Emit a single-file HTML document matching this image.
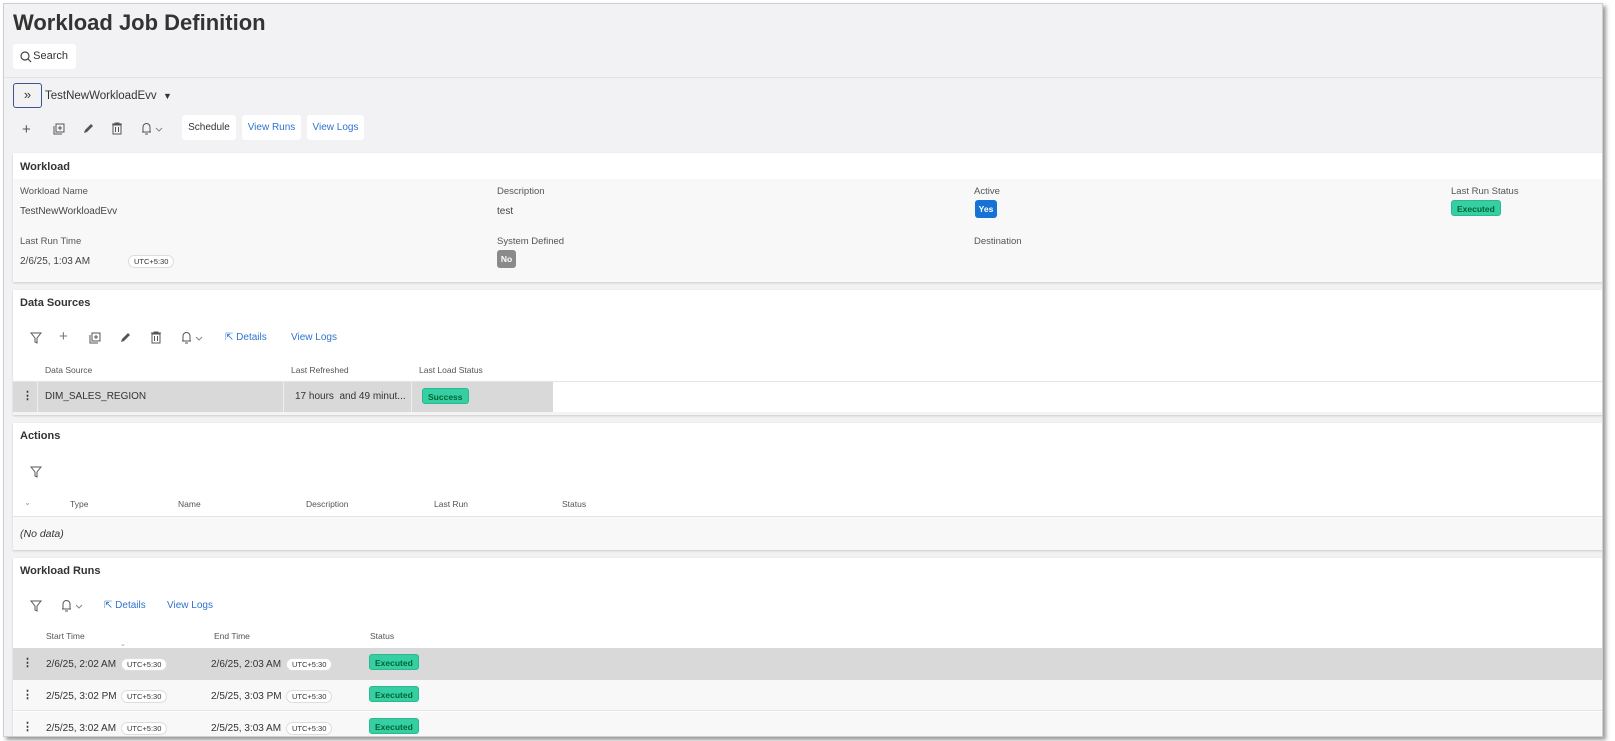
<!DOCTYPE html>
<html><head><meta charset="utf-8"><style>
*{box-sizing:border-box;margin:0;padding:0}
body{width:1615px;height:741px;background:#fff;font-family:"Liberation Sans",sans-serif;position:relative;overflow:hidden;color:#333}
.frame{position:absolute;left:3px;top:3px;width:1600px;height:734px;background:#f2f2f4;border:1px solid #cfcfcf;box-shadow:3px 3px 4px #999;overflow:hidden}
.a{position:absolute}
.card{position:absolute;left:9px;width:1592px;background:#fff;box-shadow:0 1px 2px #ccc}
.h{position:absolute;left:7px;font-size:11px;font-weight:bold;color:#333}
.lbl{position:absolute;font-size:9.5px;color:#555}
.val{position:absolute;font-size:10px;color:#444}
.btn{position:absolute;background:#fff;border-radius:3px;font-size:10px;height:25px;line-height:25px;text-align:center}
.blue{color:#2f73d0}
.badge{position:absolute;background:#35cfa3;color:#063;font-size:8.5px;font-weight:bold;border-radius:3px;height:16px;line-height:16px;padding:0 5px;border:1px solid #2cb88f}
.utc{position:absolute;font-size:7.5px;border:1px solid #ddd;border-radius:8px;padding:1px 5px;background:#fff;color:#333}
.ch{position:absolute;font-size:8.5px;color:#555}
svg{position:absolute}
</style></head><body>
<div class="frame">
<div class="a" style="left:9px;top:6px;font-size:22px;font-weight:bold;color:#333">Workload Job Definition</div>
<div class="btn" style="left:9px;top:40px;width:63px;font-size:11px">&nbsp;&nbsp;&nbsp;&nbsp;Search</div>
<svg style="left:16px;top:47px" width="12" height="12"><circle cx="5" cy="5" r="4" fill="none" stroke="#444" stroke-width="1.2"/><path d="M8 8l3 3" stroke="#444" stroke-width="1.2"/></svg>
<div class="a" style="left:0;top:73px;width:1600px;height:1px;background:#e2e2e6"></div>
<div class="a" style="left:9px;top:79px;width:29px;height:25px;border:1px solid #3b5590;border-radius:3px;text-align:center;line-height:22px;font-size:13px">»</div>
<div class="a" style="left:41px;top:86px;font-size:11.5px;color:#333">TestNewWorkloadEvv &nbsp;<span style="font-size:9px">▼</span></div>
<div class="a" style="left:18px;top:117px;font-size:15px;color:#555">+</div>
<svg style="left:49px;top:119px" width="12" height="12"><rect x="3" y="1" width="8" height="8" fill="none" stroke="#555"/><path d="M1 3v8h8M7 3v4M5 5h4" fill="none" stroke="#555"/></svg>
<svg style="left:78px;top:119px" width="12" height="12"><path d="M2 10l1-3 6-6 2 2-6 6z" fill="#555"/></svg>
<svg style="left:107px;top:118px" width="12" height="13"><path d="M1 2h10M4 2V1h4v1M2 3h8v9H2z" fill="none" stroke="#555"/><path d="M4.5 5v5M7.5 5v5" stroke="#555"/></svg>
<svg style="left:136px;top:118px" width="24" height="13"><path d="M2 10h9M3 10V5a3.5 3.5 0 0 1 7 0v5M5 12h3" fill="none" stroke="#555"/><path d="M16 6l3 3 3-3" fill="none" stroke="#888"/></svg>
<div class="btn" style="left:178px;top:111px;width:54px">Schedule</div>
<div class="btn blue" style="left:238px;top:111px;width:59px">View Runs</div>
<div class="btn blue" style="left:303px;top:111px;width:57px">View Logs</div>

<div class="card" style="top:149px;height:129px">
<div class="h" style="top:8px">Workload</div>
<div class="a" style="left:0;top:26px;width:1592px;height:103px;background:#f8f8f8"></div>
<div class="lbl" style="left:7px;top:33px">Workload Name</div>
<div class="val" style="left:7px;top:53px">TestNewWorkloadEvv</div>
<div class="lbl" style="left:7px;top:83px">Last Run Time</div>
<div class="val" style="left:7px;top:103px">2/6/25, 1:03 AM</div>
<div class="utc" style="left:115px;top:102px">UTC+5:30</div>
<div class="lbl" style="left:484px;top:33px">Description</div>
<div class="val" style="left:484px;top:53px">test</div>
<div class="lbl" style="left:484px;top:83px">System Defined</div>
<div class="a" style="left:484px;top:97px;width:19px;height:18px;background:#8a8a8a;border-radius:3px;color:#fff;font-size:8.5px;font-weight:bold;text-align:center;line-height:18px">No</div>
<div class="lbl" style="left:961px;top:33px">Active</div>
<div class="a" style="left:962px;top:47px;width:22px;height:18px;background:#1672d4;border-radius:3px;color:#fff;font-size:8.5px;font-weight:bold;text-align:center;line-height:18px">Yes</div>
<div class="lbl" style="left:961px;top:83px">Destination</div>
<div class="lbl" style="left:1438px;top:33px">Last Run Status</div>
<div class="badge" style="left:1438px;top:47px">Executed</div>
</div>

<div class="card" style="top:286px;height:125px">
<div class="h" style="top:7px">Data Sources</div>
<svg style="left:17px;top:42px" width="12" height="12"><path d="M1 1h10L7 6v5L5 10V6z" fill="none" stroke="#555"/></svg>
<div class="a" style="left:46px;top:38px;font-size:15px;color:#777">+</div>
<svg style="left:76px;top:42px" width="12" height="12"><rect x="3" y="1" width="8" height="8" fill="none" stroke="#555"/><path d="M1 3v8h8M7 3v4M5 5h4" fill="none" stroke="#555"/></svg>
<svg style="left:106px;top:42px" width="12" height="12"><path d="M2 10l1-3 6-6 2 2-6 6z" fill="#555"/></svg>
<svg style="left:137px;top:41px" width="12" height="13"><path d="M1 2h10M4 2V1h4v1M2 3h8v9H2z" fill="none" stroke="#555"/><path d="M4.5 5v5M7.5 5v5" stroke="#555"/></svg>
<svg style="left:167px;top:41px" width="24" height="13"><path d="M2 10h9M3 10V5a3.5 3.5 0 0 1 7 0v5M5 12h3" fill="none" stroke="#555"/><path d="M16 6l3 3 3-3" fill="none" stroke="#888"/></svg>
<div class="a blue" style="left:212px;top:42px;font-size:10px">⇱ Details</div>
<div class="a blue" style="left:278px;top:42px;font-size:10px">View Logs</div>
<div class="ch" style="left:32px;top:75px">Data Source</div>
<div class="ch" style="left:278px;top:75px">Last Refreshed</div>
<div class="ch" style="left:406px;top:75px">Last Load Status</div>
<div class="a" style="left:0;top:91px;width:1592px;height:1px;background:#e4e4e4"></div>
<div class="a" style="left:0;top:92px;width:540px;height:30px;background:#d9d9d9"></div>
<div class="a" style="left:24px;top:92px;width:1px;height:30px;background:#eee"></div>
<div class="a" style="left:270px;top:92px;width:1px;height:30px;background:#eee"></div>
<div class="a" style="left:398px;top:92px;width:1px;height:30px;background:#eee"></div>
<div class="a" style="left:9px;top:99px;font-size:11px;font-weight:bold">⋮</div>
<div class="a" style="left:32px;top:101px;font-size:10px">DIM_SALES_REGION</div>
<div class="a" style="left:282px;top:101px;font-size:10px">17 hours &nbsp;and 49 minut...</div>
<div class="badge" style="left:409px;top:98px">Success</div>
<div class="a" style="left:0;top:122px;width:1592px;height:3px;background:#f4f4f4"></div>
</div>

<div class="card" style="top:419px;height:127px">
<div class="h" style="top:7px">Actions</div>
<svg style="left:17px;top:43px" width="12" height="12"><path d="M1 1h10L7 6v5L5 10V6z" fill="none" stroke="#555"/></svg>
<div class="ch" style="left:11px;top:74px;color:#999">⌄</div>
<div class="ch" style="left:57px;top:76px">Type</div>
<div class="ch" style="left:165px;top:76px">Name</div>
<div class="ch" style="left:293px;top:76px">Description</div>
<div class="ch" style="left:421px;top:76px">Last Run</div>
<div class="ch" style="left:549px;top:76px">Status</div>
<div class="a" style="left:0;top:93px;width:1592px;height:34px;background:#f8f8f8;border-top:1px solid #e4e4e4"></div>
<div class="a" style="left:7px;top:105px;font-size:10.5px;font-style:italic">(No data)</div>
</div>

<div class="card" style="top:554px;height:190px">
<div class="h" style="top:7px">Workload Runs</div>
<svg style="left:17px;top:42px" width="12" height="12"><path d="M1 1h10L7 6v5L5 10V6z" fill="none" stroke="#555"/></svg>
<svg style="left:47px;top:41px" width="24" height="13"><path d="M2 10h9M3 10V5a3.5 3.5 0 0 1 7 0v5M5 12h3" fill="none" stroke="#555"/><path d="M16 6l3 3 3-3" fill="none" stroke="#888"/></svg>
<div class="a blue" style="left:91px;top:42px;font-size:10px">⇱ Details</div>
<div class="a blue" style="left:154px;top:42px;font-size:10px">View Logs</div>
<div class="ch" style="left:33px;top:73px">Start Time</div>
<div class="ch" style="left:107px;top:82px;color:#999;font-size:7px">⌄</div>
<div class="ch" style="left:201px;top:73px">End Time</div>
<div class="ch" style="left:357px;top:73px">Status</div>
<div class="a" style="left:0;top:90px;width:1592px;height:32px;background:#d9d9d9"></div>
<div class="a" style="left:0;top:122px;width:1592px;height:31px;background:#f8f8f8;border-bottom:1px solid #e4e4e4"></div>
<div class="a" style="left:0;top:154px;width:1592px;height:31px;background:#f8f8f8"></div>
<div class="a" style="left:9px;top:98px;font-size:11px;font-weight:bold">⋮</div>
<div class="a" style="left:33px;top:101px;font-size:10px">2/6/25, 2:02 AM</div><div class="utc" style="left:108px;top:100px">UTC+5:30</div>
<div class="a" style="left:198px;top:101px;font-size:10px">2/6/25, 2:03 AM</div><div class="utc" style="left:273px;top:100px">UTC+5:30</div>
<div class="badge" style="left:356px;top:96px">Executed</div>
<div class="a" style="left:9px;top:130px;font-size:11px;font-weight:bold">⋮</div>
<div class="a" style="left:33px;top:133px;font-size:10px">2/5/25, 3:02 PM</div><div class="utc" style="left:108px;top:132px">UTC+5:30</div>
<div class="a" style="left:198px;top:133px;font-size:10px">2/5/25, 3:03 PM</div><div class="utc" style="left:273px;top:132px">UTC+5:30</div>
<div class="badge" style="left:356px;top:128px">Executed</div>
<div class="a" style="left:9px;top:162px;font-size:11px;font-weight:bold">⋮</div>
<div class="a" style="left:33px;top:165px;font-size:10px">2/5/25, 3:02 AM</div><div class="utc" style="left:108px;top:164px">UTC+5:30</div>
<div class="a" style="left:198px;top:165px;font-size:10px">2/5/25, 3:03 AM</div><div class="utc" style="left:273px;top:164px">UTC+5:30</div>
<div class="badge" style="left:356px;top:160px">Executed</div>
</div>
</div>
</body></html>
